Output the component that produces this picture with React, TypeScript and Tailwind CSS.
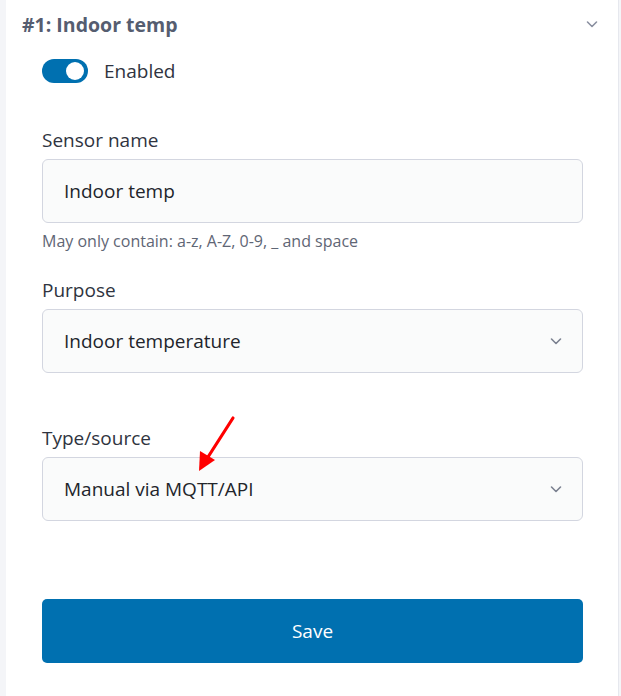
import { useState } from "react";

function Chevron({ className }: { className?: string }) {
    return (
        <svg viewBox="0 0 16 16" className={className} fill="none" stroke="currentColor" strokeWidth={1.6} strokeLinecap="round" strokeLinejoin="round">
            <path d="M3.5 6l4.5 4.5L12.5 6" />
        </svg>
    );
}

function Field({ label, children, hint }: { label: string; children: React.ReactNode; hint?: string }) {
    return (
        <div className="flex flex-col">
            <label className="text-[19px] leading-[24px] text-[#2f3440] mb-[7px]">{label}</label>
            {children}
            {hint && <p className="text-[16px] leading-[20px] text-[#5f6675] mt-[8px]">{hint}</p>}
        </div>
    );
}

function Select({ value }: { value: string }) {
    return (
        <div className="h-[64px] rounded-[6px] border border-[#d3d6e0] bg-[#fafbfb] flex items-center justify-between pl-[21px] pr-[18px]">
            <span className="text-[19px] text-[#22252b]">{value}</span>
            <Chevron className="w-[16px] h-[16px] text-[#7b8190]" />
        </div>
    );
}

export default function App() {
    const [enabled, setEnabled] = useState(true);

    return (
        <div className="w-[621px] h-[696px] bg-[#f4f5f8] flex font-['Open_Sans',sans-serif]">
            <div className="ml-[6px] w-[613px] bg-white border-r border-[#e6e8ee] relative">
                <div className="flex items-center justify-between pl-[16px] pr-[18px] pt-[13px]">
                    <h2 className="text-[19.5px] leading-[24px] font-bold text-[#555d70]">#1: Indoor temp</h2>
                    <Chevron className="w-[16px] h-[16px] text-[#8a90a0] -mt-[2px]" />
                </div>

                <div className="pl-[36px] pr-[35px]">
                    <div className="flex items-center gap-[16px] mt-[22px]">
                        <button
                            onClick={() => setEnabled(!enabled)}
                            className={"w-[46px] h-[24px] rounded-full flex items-center px-[4px] " + (enabled ? "bg-[#0070b0] justify-end" : "bg-gray-300 justify-start")}
                        >
                            <span className="w-[18px] h-[18px] rounded-full bg-white" />
                        </button>
                        <span className="text-[19px] leading-[24px] text-[#2f3440]">Enabled</span>
                    </div>

                    <div className="mt-[45px]">
                        <Field label="Sensor name" hint="May only contain: a-z, A-Z, 0-9, _ and space">
                            <div className="h-[64px] rounded-[6px] border border-[#d3d6e0] bg-[#fafbfb] flex items-center pl-[21px]">
                                <span className="text-[19px] text-[#22252b]">Indoor temp</span>
                            </div>
                        </Field>
                    </div>

                    <div className="mt-[27px]">
                        <Field label="Purpose">
                            <Select value="Indoor temperature" />
                        </Field>
                    </div>

                    <div className="mt-[53px]">
                        <Field label="Type/source">
                            <Select value="Manual via MQTT/API" />
                        </Field>
                    </div>

                    <button className="mt-[78px] w-full h-[64px] rounded-[5px] bg-[#0070b0] text-white text-[19px]">
                        Save
                    </button>
                </div>

                <svg className="absolute left-[184px] top-[412px] w-[52px] h-[64px] pointer-events-none" viewBox="0 0 52 64">
                    <line x1="43" y1="6" x2="18" y2="45" stroke="#ff0000" strokeWidth="3.2" strokeLinecap="round" />
                    <polygon points="9,59 10,39 25,48" fill="#ff0000" />
                </svg>
            </div>
        </div>
    );
}
